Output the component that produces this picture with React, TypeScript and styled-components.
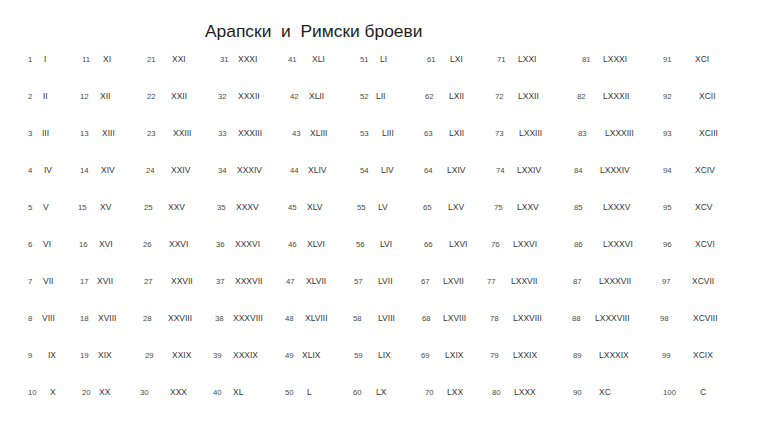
import React from "react";
import styled, { createGlobalStyle } from "styled-components";

const Global = createGlobalStyle`
  html, body { margin: 0; padding: 0; background: #ffffff; }
  body { font-family: "Liberation Sans", Arial, sans-serif; -webkit-font-smoothing: antialiased; }
`;

const Page = styled.main`
  width: 768px;
  height: 433px;
  background: #ffffff;
  display: flex;
  flex-direction: column;
`;

const Title = styled.h1`
  margin: 22px 0 0 0;
  padding-left: 205px;
  height: 18px;
  line-height: 18px;
  font-size: 17.4px;
  font-weight: 400;
  color: #1e1e1e;
  white-space: pre;
`;

const Table = styled.section`
  display: flex;
  flex-direction: column;
`;

const COLS = [28, 78, 140, 213, 285, 353, 421, 487, 572, 660];

const Row = styled.div`
  display: grid;
  grid-template-columns: ${COLS.map((c, i) => `${(i < COLS.length - 1 ? COLS[i + 1] : 768) - c}px`).join(" ")};
  padding-left: ${COLS[0]}px;
  height: 37px;
  align-items: center;
`;

const Cell = styled.div`
  display: flex;
  align-items: baseline;
  white-space: nowrap;
`;

const Num = styled.span`
  flex: none;
  font-size: 7.8px;
  color: #4c4c4c;
`;

const Roman = styled.span`
  font-size: 8.5px;
  color: #363636;
`;

const NUM_X: number[][] = [
  [28, 28, 28, 28, 28, 28, 28, 28, 28, 28],
  [82, 80, 80, 80, 78, 79, 80, 80, 80, 82],
  [147, 147, 147, 146, 144, 143, 144, 143, 145, 140],
  [220, 218, 218, 218, 217, 216, 216, 215, 213, 213],
  [288, 290, 292, 290, 288, 288, 286, 285, 285, 285],
  [360, 360, 360, 360, 357, 356, 354, 353, 354, 353],
  [427, 425, 424, 424, 423, 424, 421, 422, 421, 425],
  [497, 495, 495, 496, 494, 491, 487, 490, 490, 492],
  [582, 577, 578, 574, 574, 574, 573, 572, 573, 573],
  [663, 663, 663, 663, 663, 663, 662, 660, 662, 663],
];

const ROM_X: number[][] = [
  [44, 43, 42, 44, 43, 43, 43, 42, 48, 50],
  [103, 100, 102, 101, 100, 99, 97, 98, 98, 99],
  [172, 171, 173, 171, 168, 169, 171, 168, 172, 170],
  [238, 238, 238, 237, 236, 235, 235, 233, 233, 233],
  [312, 309, 310, 308, 307, 307, 306, 305, 302, 307],
  [380, 376, 382, 381, 378, 380, 378, 378, 378, 376],
  [450, 449, 449, 447, 448, 449, 443, 443, 445, 447],
  [518, 518, 519, 517, 517, 513, 511, 513, 513, 514],
  [603, 603, 605, 600, 603, 603, 599, 595, 599, 599],
  [695, 699, 699, 695, 695, 695, 692, 693, 693, 700],
];

function toRoman(n: number): string {
  const map: [number, string][] = [
    [100, "C"], [90, "XC"], [50, "L"], [40, "XL"], [10, "X"], [9, "IX"], [5, "V"], [4, "IV"], [1, "I"],
  ];
  let out = "";
  for (const [v, s] of map) {
    while (n >= v) { out += s; n -= v; }
  }
  return out;
}

const OVERRIDES: Record<number, string> = { 63: "LXII" };

export default function App() {
  const rows = Array.from({ length: 10 }, (_, r) => r);
  const cols = Array.from({ length: 10 }, (_, c) => c);
  return (
    <>
      <Global />
      <Page>
        <Title>{"Арапски  и  Римски броеви"}</Title>
        <Table>
          {rows.map((r) => (
            <Row key={r}>
              {cols.map((c) => {
                const n = c * 10 + r + 1;
                const nx = NUM_X[c][r];
                const rx = ROM_X[c][r];
                return (
                  <Cell key={c}>
                    <Num style={{ marginLeft: nx - COLS[c], width: rx - nx }}>{n}</Num>
                    <Roman>{OVERRIDES[n] ?? toRoman(n)}</Roman>
                  </Cell>
                );
              })}
            </Row>
          ))}
        </Table>
      </Page>
    </>
  );
}
